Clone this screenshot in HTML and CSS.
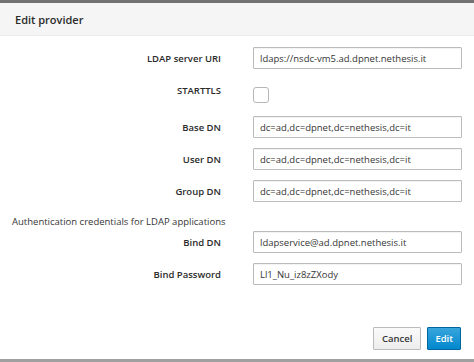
FILE: index.html
```html
<!DOCTYPE html>
<html>
<head>
<meta charset="utf-8">
<link rel="stylesheet" href="styles.css">
</head>
<body>
<div class="topbar"></div>
<div class="modal">
  <div class="header"><span class="title">Edit provider</span></div>
  <form class="body">
    <div class="row">
      <label class="label">LDAP server URI</label>
      <input class="field" type="text" value="ldaps://nsdc-vm5.ad.dpnet.nethesis.it">
    </div>
    <div class="row row-check">
      <label class="label">STARTTLS</label>
      <span class="check"></span>
    </div>
    <div class="row">
      <label class="label">Base DN</label>
      <input class="field" type="text" value="dc=ad,dc=dpnet,dc=nethesis,dc=it">
    </div>
    <div class="row">
      <label class="label">User DN</label>
      <input class="field" type="text" value="dc=ad,dc=dpnet,dc=nethesis,dc=it">
    </div>
    <div class="row">
      <label class="label">Group DN</label>
      <input class="field" type="text" value="dc=ad,dc=dpnet,dc=nethesis,dc=it">
    </div>
    <div class="section">Authentication credentials for LDAP applications</div>
    <div class="row">
      <label class="label">Bind DN</label>
      <input class="field" type="text" value="ldapservice@ad.dpnet.nethesis.it">
    </div>
    <div class="row">
      <label class="label">Bind Password</label>
      <input class="field" type="text" value="Ll1_Nu_iz8zZXody">
    </div>
  </form>
  <div class="footer">
    <button class="btn btn-default" type="button">Cancel</button>
    <button class="btn btn-primary" type="button">Edit</button>
  </div>
</div>
<div class="bottombar"></div>
</body>
</html>
```
FILE: styles.css
```css
html, body {
  margin: 0;
  padding: 0;
  background: #ffffff;
}
body {
  width: 474px;
  height: 362px;
  overflow: hidden;
  font-family: "Open Sans", "Liberation Sans", sans-serif;
  font-size: 9.5px;
  color: #363636;
  display: flex;
  flex-direction: column;
}
.topbar {
  height: 3px;
  background: #727272;
  flex: none;
}
.modal {
  flex: 1;
  display: flex;
  flex-direction: column;
}
.header {
  height: 32px;
  background: #f5f5f5;
  border-bottom: 1px solid #ececec;
  display: flex;
  align-items: center;
  padding-left: 15px;
  flex: none;
}
.title {
  font-weight: 600;
  font-size: 11px;
  color: #2b2b2b;
}
.body {
  margin: 0;
  padding: 11px 13px 0 12px;
  display: flex;
  flex-direction: column;
}
.row {
  display: grid;
  grid-template-columns: 209px 209px;
  column-gap: 32px;
  align-items: center;
  margin-bottom: 10px;
}
.label {
  text-align: right;
  font-weight: 600;
  color: #2b2b2b;
}
.field {
  box-sizing: border-box;
  height: 22px;
  width: 209px;
  margin: 0;
  border: 1px solid #bbbbbb;
  border-radius: 1px;
  padding: 0 6px;
  font-family: "Open Sans", "Liberation Sans", sans-serif;
  font-size: 9.5px;
  color: #363636;
  background: #fff;
  box-shadow: inset 0 1px 1px rgba(3,3,3,0.05);
  outline: none;
}
.row-check {
  align-items: start;
  height: 27px;
}
.row-check .label {
  padding-top: 5px;
}
.check {
  display: block;
  width: 14px;
  height: 14px;
  margin-top: 8px;
  border: 1px solid #b7b7b7;
  border-radius: 3px;
  background: #fff;
}
.section {
  margin-top: 1px;
  line-height: 17px;
  margin-bottom: 1px;
}
.footer {
  margin-top: auto;
  display: flex;
  justify-content: flex-end;
  gap: 6px;
  padding: 0 13px 9px 0;
}
.btn {
  box-sizing: border-box;
  height: 23px;
  padding: 0 7px;
  font-family: "Open Sans", "Liberation Sans", sans-serif;
  font-size: 9.5px;
  font-weight: 600;
  border-radius: 1px;
  margin: 0;
}
.btn-default {
  padding: 0 8px;
  background: linear-gradient(#fafafa, #ededed);
  border: 1px solid #bbbbbb;
  color: #363636;
}
.btn-primary {
  background: linear-gradient(#39a5dc, #0088ce);
  border: 1px solid #00659c;
  color: #ffffff;
}
.bottombar {
  height: 3px;
  background: #a0a0a0;
  flex: none;
}
```
